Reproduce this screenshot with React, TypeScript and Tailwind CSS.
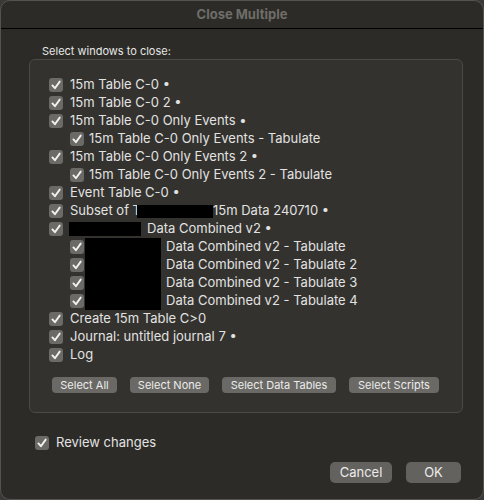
import React from 'react';

const Check = ({ className = '' }: { className?: string }) => (
  <span className={`inline-flex h-[14px] w-[14px] shrink-0 items-center justify-center rounded-[3px] bg-[#6b6a66] ${className}`}>
    <svg viewBox="0 0 14 14" className="h-[14px] w-[14px]">
      <path d="M3.4 7.4 L5.9 10.2 L10.7 3.6" fill="none" stroke="#f2f2f2" strokeWidth="1.9" strokeLinecap="round" strokeLinejoin="round" />
    </svg>
  </span>
);

const Redact = ({ w, h = 'h-[15px]', className = '' }: { w: string; h?: string; className?: string }) => (
  <span className={`inline-block bg-black ${w} ${h} ${className}`} />
);

type Row = { indent?: boolean; content: React.ReactNode };

const tabRow = (label: string) => (
  <>
    <Redact w="w-[76px]" h="h-[18px]" className="-ml-[4px]" />
    <span className="ml-[5px]">{label}</span>
  </>
);

const rows: Row[] = [
  { content: '15m Table C-0 •' },
  { content: '15m Table C-0 2 •' },
  { content: '15m Table C-0 Only Events •' },
  { indent: true, content: '15m Table C-0 Only Events - Tabulate' },
  { content: '15m Table C-0 Only Events 2 •' },
  { indent: true, content: '15m Table C-0 Only Events 2 - Tabulate' },
  { content: 'Event Table C-0 •' },
  {
    content: (
      <>
        Subset of T<Redact w="w-[76px]" h="h-[13px]" className="-ml-[4px]" />
        15m Data 240710 •
      </>
    ),
  },
  {
    content: (
      <>
        <Redact w="w-[72px]" h="h-[14px]" className="-ml-[1px]" />
        <span className="ml-[6px]">Data Combined v2 •</span>
      </>
    ),
  },
  { indent: true, content: tabRow('Data Combined v2 - Tabulate') },
  { indent: true, content: tabRow('Data Combined v2 - Tabulate 2') },
  { indent: true, content: tabRow('Data Combined v2 - Tabulate 3') },
  { indent: true, content: tabRow('Data Combined v2 - Tabulate 4') },
  { content: 'Create 15m Table C>0' },
  { content: 'Journal: untitled journal 7 •' },
  { content: 'Log' },
];

const SmallBtn = ({ label, w }: { label: string; w: string }) => (
  <button className={`h-[16px] ${w} rounded-[4px] bg-[#6a6965] text-[11px] leading-[16px] text-[#ececec]`}>{label}</button>
);

export default function App() {
  return (
    <div className="h-[500px] w-[484px] bg-[#3a3937]" style={{ fontFamily: 'Inter, "Liberation Sans", sans-serif' }}>
      <div className="h-[500px] w-[484px] overflow-hidden rounded-[10px] border border-[#55534f] bg-[#2c2b27]">
        <div className="flex h-[28px] items-center justify-center border-b border-black text-[13px] font-bold text-[#6e6d69]">
          Close Multiple
        </div>
        <div className="ml-[41px] mt-[15px] text-[11px] leading-[14px] text-[#e6e6e6]">Select windows to close:</div>
        <div className="ml-[28px] mt-[1px] w-[434px] rounded-[6px] border border-[#4b4a46] bg-[#33322e] pb-[19px] pl-[19px] pt-[16px]">
          <div className="flex flex-col">
            {rows.map((r, i) => (
              <div key={i} className={`flex h-[18px] items-center whitespace-nowrap text-[13px] text-[#e2e2e2] ${r.indent ? 'pl-[21px]' : ''}`}>
                <Check />
                <span className={`flex items-center ${r.indent ? 'ml-[5px]' : 'ml-[7px]'}`}>{r.content}</span>
              </div>
            ))}
          </div>
          <div className="mt-[13px] flex gap-[13px] pl-[3px]">
            <SmallBtn label="Select All" w="w-[65px]" />
            <SmallBtn label="Select None" w="w-[79px]" />
            <SmallBtn label="Select Data Tables" w="w-[114px]" />
            <SmallBtn label="Select Scripts" w="w-[90px]" />
          </div>
        </div>
        <div className="ml-[34px] mt-[21px] flex h-[18px] items-center text-[13px] text-[#e2e2e2]">
          <Check />
          <span className="ml-[7px]">Review changes</span>
        </div>
        <div className="mr-[22px] mt-[10px] flex justify-end gap-[14px]">
          <button className="h-[21px] w-[62px] rounded-[5px] bg-[#63625e] text-[13px] text-[#ececec]">Cancel</button>
          <button className="h-[21px] w-[55px] rounded-[5px] bg-[#63625e] text-[13px] text-[#ececec]">OK</button>
        </div>
      </div>
    </div>
  );
}
